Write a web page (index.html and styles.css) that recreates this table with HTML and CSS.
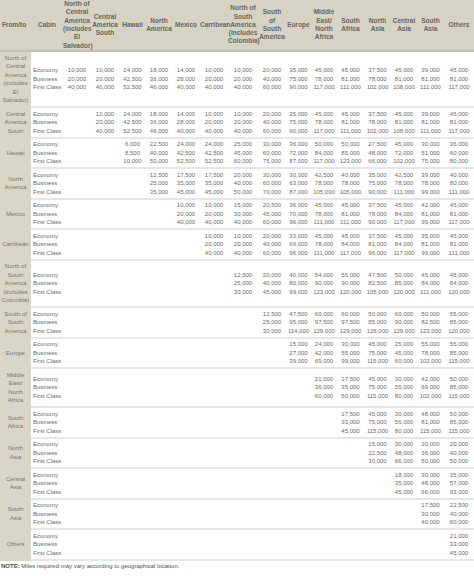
FILE: index.html
```html
<!DOCTYPE html>
<html>
<head>
<meta charset="utf-8">
<link rel="stylesheet" href="styles.css">
</head>
<body>
<table class="miles">
<colgroup>
<col class="w31"><col class="w32"><col class="w28"><col class="w28"><col class="w27"><col class="w26"><col class="w28"><col class="w28"><col class="w30"><col class="w28"><col class="w25"><col class="w26"><col class="w27"><col class="w27"><col class="w26"><col class="w27"><col class="w30">
</colgroup>
<thead>
<tr>
<th class="fromto">From/to</th>
<th>Cabin</th>
<th>North of<br>Central<br>America<br>(includes<br>El<br>Salvador)</th>
<th>Central<br>America<br>South</th>
<th>Hawaii</th>
<th>North<br>America</th>
<th>Mexico</th>
<th>Carribean</th>
<th>North of<br>South<br>America<br>(includes<br>Colombia)</th>
<th>South<br>of<br>South<br>America</th>
<th>Europe</th>
<th>Middle<br>East/<br>North<br>Africa</th>
<th>South<br>Africa</th>
<th>North<br>Asia</th>
<th>Central<br>Asia</th>
<th>South<br>Asia</th>
<th>Others</th>
</tr>
</thead>
<tbody>
<tr>
<td class="from">North of<br>Central<br>America<br>(includes<br>El<br>Salvador)</td>
<td class="cab">Economy<br>Business<br>First Class</td>
<td>10,000<br>20,000<br>40,000</td>
<td>10,000<br>20,000<br>40,000</td>
<td>24,000<br>42,500<br>52,500</td>
<td>18,000<br>36,000<br>46,000</td>
<td>14,000<br>28,000<br>40,000</td>
<td>10,000<br>20,000<br>40,000</td>
<td>10,000<br>20,000<br>40,000</td>
<td>20,000<br>40,000<br>60,000</td>
<td>35,000<br>75,000<br>90,000</td>
<td>45,000<br>78,000<br>117,000</td>
<td>45,000<br>81,000<br>111,000</td>
<td>37,500<br>78,000<br>102,000</td>
<td>45,000<br>81,000<br>108,000</td>
<td>39,000<br>81,000<br>111,000</td>
<td>45,000<br>81,000<br>117,000</td>
</tr>
<tr>
<td class="from">Central<br>America<br>South</td>
<td class="cab">Economy<br>Business<br>First Class</td>
<td></td>
<td>10,000<br>20,000<br>40,000</td>
<td>24,000<br>42,500<br>52,500</td>
<td>18,000<br>36,000<br>46,000</td>
<td>14,000<br>28,000<br>40,000</td>
<td>10,000<br>20,000<br>40,000</td>
<td>10,000<br>20,000<br>40,000</td>
<td>20,000<br>40,000<br>60,000</td>
<td>35,000<br>75,000<br>90,000</td>
<td>45,000<br>78,000<br>117,000</td>
<td>45,000<br>81,000<br>111,000</td>
<td>37,500<br>78,000<br>102,000</td>
<td>45,000<br>81,000<br>108,000</td>
<td>39,000<br>81,000<br>111,000</td>
<td>45,000<br>81,000<br>117,000</td>
</tr>
<tr>
<td class="from">Hawaii</td>
<td class="cab">Economy<br>Business<br>First Class</td>
<td></td><td></td>
<td>6,000<br>8,500<br>10,000</td>
<td>22,500<br>40,000<br>50,000</td>
<td>24,000<br>42,500<br>52,500</td>
<td>24,000<br>42,500<br>52,500</td>
<td>25,000<br>45,000<br>60,000</td>
<td>30,000<br>60,000<br>75,000</td>
<td>36,000<br>72,000<br>87,000</td>
<td>50,000<br>84,000<br>117,000</td>
<td>50,000<br>85,000<br>123,000</td>
<td>27,500<br>48,000<br>66,000</td>
<td>45,000<br>72,000<br>102,000</td>
<td>30,000<br>51,000<br>75,000</td>
<td>36,000<br>60,000<br>80,000</td>
</tr>
<tr>
<td class="from">North<br>America</td>
<td class="cab">Economy<br>Business<br>First Class</td>
<td></td><td></td><td></td>
<td>12,500<br>25,000<br>35,000</td>
<td>17,500<br>35,000<br>45,000</td>
<td>17,500<br>35,000<br>45,000</td>
<td>20,000<br>40,000<br>50,000</td>
<td>30,000<br>60,000<br>70,000</td>
<td>30,000<br>63,000<br>87,000</td>
<td>42,500<br>78,000<br>105,000</td>
<td>40,000<br>78,000<br>105,000</td>
<td>35,000<br>75,000<br>90,000</td>
<td>42,500<br>78,000<br>111,000</td>
<td>39,000<br>78,000<br>99,000</td>
<td>40,000<br>80,000<br>111,000</td>
</tr>
<tr>
<td class="from">Mexico</td>
<td class="cab">Economy<br>Business<br>First Class</td>
<td></td><td></td><td></td><td></td>
<td>10,000<br>20,000<br>40,000</td>
<td>10,000<br>20,000<br>40,000</td>
<td>15,000<br>30,000<br>40,000</td>
<td>20,500<br>45,000<br>60,000</td>
<td>36,000<br>70,000<br>96,000</td>
<td>45,000<br>78,000<br>111,000</td>
<td>45,000<br>81,000<br>111,000</td>
<td>37,500<br>78,000<br>90,000</td>
<td>45,000<br>84,000<br>117,000</td>
<td>42,000<br>81,000<br>99,000</td>
<td>45,000<br>81,000<br>117,000</td>
</tr>
<tr>
<td class="from">Carribean</td>
<td class="cab">Economy<br>Business<br>First Class</td>
<td></td><td></td><td></td><td></td><td></td>
<td>10,000<br>20,000<br>40,000</td>
<td>10,000<br>20,000<br>40,000</td>
<td>20,000<br>40,000<br>60,000</td>
<td>33,000<br>69,000<br>96,000</td>
<td>45,000<br>78,000<br>111,000</td>
<td>45,000<br>84,000<br>117,000</td>
<td>37,500<br>81,000<br>96,000</td>
<td>45,000<br>84,000<br>117,000</td>
<td>35,000<br>81,000<br>99,000</td>
<td>45,000<br>81,000<br>111,000</td>
</tr>
<tr>
<td class="from">North of<br>South<br>America<br>(includes<br>Colombia)</td>
<td class="cab">Economy<br>Business<br>First Class</td>
<td></td><td></td><td></td><td></td><td></td><td></td>
<td>12,500<br>25,000<br>30,000</td>
<td>20,000<br>40,000<br>45,000</td>
<td>40,000<br>80,000<br>99,000</td>
<td>54,000<br>90,000<br>123,000</td>
<td>55,000<br>90,000<br>120,000</td>
<td>47,500<br>82,500<br>105,000</td>
<td>50,000<br>85,000<br>120,000</td>
<td>45,000<br>84,000<br>111,000</td>
<td>45,000<br>84,000<br>120,000</td>
</tr>
<tr>
<td class="from">South of<br>South<br>America</td>
<td class="cab">Economy<br>Business<br>First Class</td>
<td></td><td></td><td></td><td></td><td></td><td></td><td></td>
<td>12,500<br>25,000<br>30,000</td>
<td>47,500<br>95,000<br>114,000</td>
<td>60,000<br>97,500<br>129,000</td>
<td>60,000<br>97,500<br>129,000</td>
<td>50,000<br>85,000<br>126,000</td>
<td>60,000<br>90,000<br>129,000</td>
<td>50,000<br>82,500<br>123,000</td>
<td>55,000<br>85,000<br>120,000</td>
</tr>
<tr>
<td class="from">Europe</td>
<td class="cab">Economy<br>Business<br>First Class</td>
<td></td><td></td><td></td><td></td><td></td><td></td><td></td><td></td>
<td>15,000<br>27,000<br>39,000</td>
<td>24,000<br>42,000<br>69,000</td>
<td>30,000<br>55,000<br>99,000</td>
<td>45,000<br>75,000<br>115,000</td>
<td>25,000<br>45,000<br>60,000</td>
<td>55,000<br>78,000<br>102,000</td>
<td>55,000<br>85,000<br>115,000</td>
</tr>
<tr>
<td class="from">Middle<br>East/<br>North<br>Africa</td>
<td class="cab">Economy<br>Business<br>First Class</td>
<td></td><td></td><td></td><td></td><td></td><td></td><td></td><td></td><td></td>
<td>21,000<br>36,000<br>60,000</td>
<td>17,500<br>35,000<br>50,000</td>
<td>45,000<br>75,000<br>115,000</td>
<td>30,000<br>55,000<br>80,000</td>
<td>42,000<br>69,000<br>102,000</td>
<td>50,000<br>85,000<br>115,000</td>
</tr>
<tr>
<td class="from">South<br>Africa</td>
<td class="cab">Economy<br>Business<br>First Class</td>
<td></td><td></td><td></td><td></td><td></td><td></td><td></td><td></td><td></td><td></td>
<td>17,500<br>33,000<br>45,000</td>
<td>45,000<br>75,000<br>115,000</td>
<td>30,000<br>56,000<br>80,000</td>
<td>48,000<br>81,000<br>115,000</td>
<td>50,000<br>85,000<br>115,000</td>
</tr>
<tr>
<td class="from">North<br>Asia</td>
<td class="cab">Economy<br>Business<br>First Class</td>
<td></td><td></td><td></td><td></td><td></td><td></td><td></td><td></td><td></td><td></td><td></td>
<td>15,000<br>22,500<br>30,000</td>
<td>30,000<br>48,000<br>66,000</td>
<td>20,000<br>36,000<br>50,000</td>
<td>20,000<br>40,000<br>50,000</td>
</tr>
<tr>
<td class="from">Central<br>Asia</td>
<td class="cab">Economy<br>Business<br>First Class</td>
<td></td><td></td><td></td><td></td><td></td><td></td><td></td><td></td><td></td><td></td><td></td><td></td>
<td>18,000<br>35,000<br>45,000</td>
<td>30,000<br>48,000<br>66,000</td>
<td>35,000<br>57,000<br>93,000</td>
</tr>
<tr>
<td class="from">South<br>Asia</td>
<td class="cab">Economy<br>Business<br>First Class</td>
<td></td><td></td><td></td><td></td><td></td><td></td><td></td><td></td><td></td><td></td><td></td><td></td><td></td>
<td>17,500<br>30,000<br>40,000</td>
<td>22,500<br>40,000<br>60,000</td>
</tr>
<tr>
<td class="from">Others</td>
<td class="cab">Economy<br>Business<br>First Class</td>
<td></td><td></td><td></td><td></td><td></td><td></td><td></td><td></td><td></td><td></td><td></td><td></td><td></td><td></td>
<td>21,000<br>33,000<br>45,000</td>
</tr>
</tbody>
</table>
<p class="note"><b>NOTE:</b> Miles required may vary according to geographical location.</p>
</body>
</html>
```

FILE: styles.css
```css
html, body {
  margin: 0;
  padding: 0;
  background: #ffffff;
}

.miles {
  border-collapse: collapse;
  table-layout: fixed;
  width: 474px;
  font-family: "Liberation Sans", Arial, sans-serif;
}

.w25 { width: 25px; }
.w26 { width: 26px; }
.w27 { width: 27px; }
.w28 { width: 28px; }
.w30 { width: 30px; }
.w31 { width: 31px; }
.w32 { width: 32px; }

.miles th {
  background: #d6d3c4;
  color: #66655f;
  font-weight: bold;
  font-size: 6.5px;
  line-height: 8.3px;
  text-align: center;
  vertical-align: middle;
  white-space: nowrap;
  height: 50px;
  padding: 0;
  border-bottom: 2px solid #c4c1b3;
  overflow: visible;
}

.miles th.fromto {
  text-align: left;
  padding-left: 2px;
}

.miles td {
  color: #6a6a6a;
  font-size: 6px;
  line-height: 8.5px;
  text-align: center;
  vertical-align: middle;
  white-space: nowrap;
  padding: 1.5px 0;
  border-bottom: 2px solid #e6e6e6;
  overflow: visible;
}

.miles td.from {
  background: #d9d6c8;
  color: #75746e;
  border-bottom-color: #d9d6c8;
}

.miles td.cab {
  text-align: left;
  padding-left: 2px;
}

.note {
  margin: 0;
  padding: 1px 0 0 1px;
  font-family: "Liberation Sans", Arial, sans-serif;
  font-size: 6px;
  line-height: 8px;
  color: #4f4f4f;
}

.note b {
  font-weight: bold;
}
```
